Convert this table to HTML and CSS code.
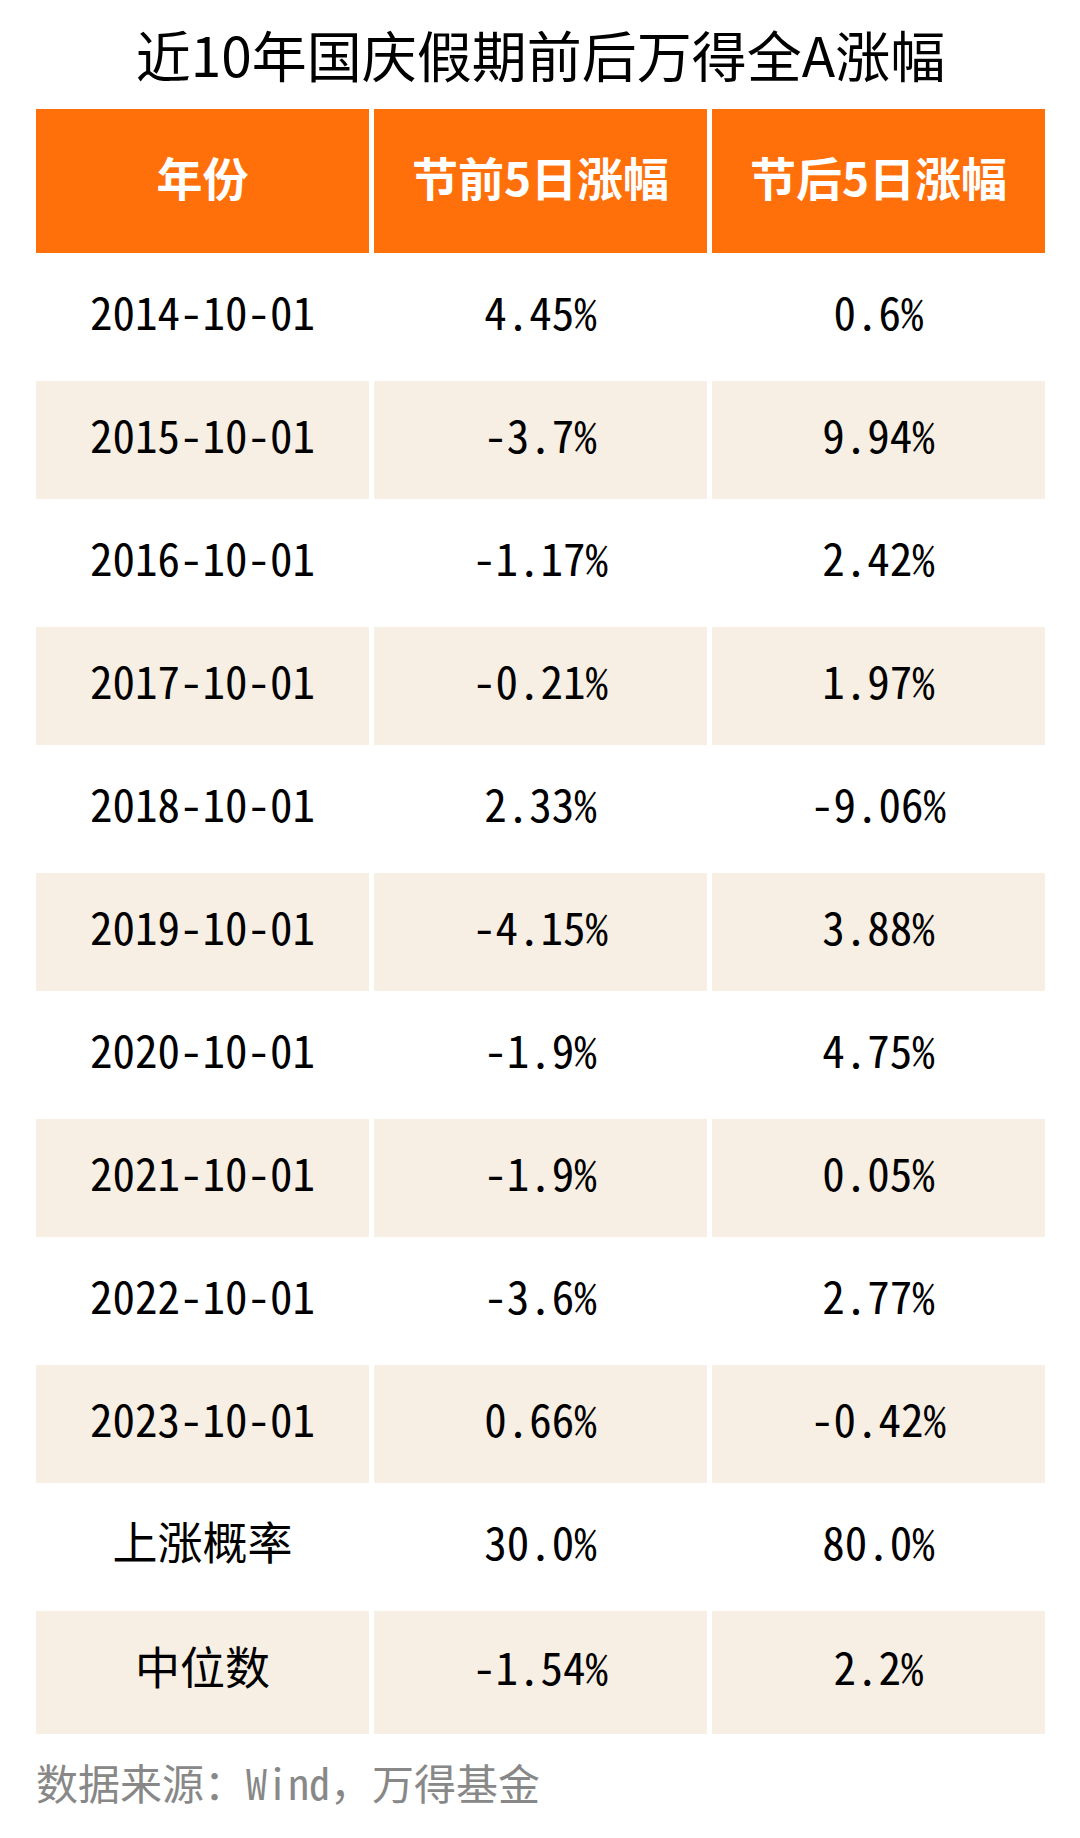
FILE: index.html
```html
<!DOCTYPE html>
<html lang="zh-CN">
<head>
<meta charset="utf-8">
<title>近10年国庆假期前后万得全A涨幅</title>
<link rel="stylesheet" href="styles.css">
</head>
<body>
<div class="page">
  <h1 class="title">近10年国庆假期前后万得全A涨幅</h1>
  <div class="table">
    <div class="row head">
      <div class="cell">年份</div>
      <div class="cell">节前5日涨幅</div>
      <div class="cell">节后5日涨幅</div>
    </div>
    <div class="row"><div class="cell">2014-10-01</div><div class="cell">4.45%</div><div class="cell">0.6%</div></div>
    <div class="row alt"><div class="cell">2015-10-01</div><div class="cell">-3.7%</div><div class="cell">9.94%</div></div>
    <div class="row"><div class="cell">2016-10-01</div><div class="cell">-1.17%</div><div class="cell">2.42%</div></div>
    <div class="row alt"><div class="cell">2017-10-01</div><div class="cell">-0.21%</div><div class="cell">1.97%</div></div>
    <div class="row"><div class="cell">2018-10-01</div><div class="cell">2.33%</div><div class="cell">-9.06%</div></div>
    <div class="row alt"><div class="cell">2019-10-01</div><div class="cell">-4.15%</div><div class="cell">3.88%</div></div>
    <div class="row"><div class="cell">2020-10-01</div><div class="cell">-1.9%</div><div class="cell">4.75%</div></div>
    <div class="row alt"><div class="cell">2021-10-01</div><div class="cell">-1.9%</div><div class="cell">0.05%</div></div>
    <div class="row"><div class="cell">2022-10-01</div><div class="cell">-3.6%</div><div class="cell">2.77%</div></div>
    <div class="row alt"><div class="cell">2023-10-01</div><div class="cell">0.66%</div><div class="cell">-0.42%</div></div>
    <div class="row"><div class="cell">上涨概率</div><div class="cell">30.0%</div><div class="cell">80.0%</div></div>
    <div class="row alt last"><div class="cell">中位数</div><div class="cell">-1.54%</div><div class="cell">2.2%</div></div>
  </div>
  <div class="source">数据来源：Wind，万得基金</div>
</div>
</body>
</html>
```
FILE: styles.css
```css
html, body {
  margin: 0;
  padding: 0;
  background: #ffffff;
}
.page {
  width: 1080px;
  padding: 0 35px 0 36px;
  box-sizing: border-box;
  font-family: "Noto Sans Mono CJK SC", "Noto Sans CJK SC", sans-serif;
  color: #000;
}
.title {
  margin: 0;
  height: 109px;
  padding-bottom: 2px;
  box-sizing: border-box;
  display: flex;
  align-items: center;
  justify-content: center;
  font-family: "Noto Sans CJK SC", sans-serif;
  font-weight: 400;
  font-size: 55px;
  line-height: 1;
}
.table {
  display: flex;
  flex-direction: column;
  gap: 5px;
}
.row {
  display: grid;
  grid-template-columns: 333px 333px 333px;
  column-gap: 5px;
  height: 118px;
}
.row.head {
  height: 144px;
}
.row.last {
  height: 123px;
}
.cell {
  display: flex;
  align-items: center;
  justify-content: center;
  box-sizing: border-box;
  padding-bottom: 14px;
  font-size: 45px;
  line-height: 1;
}
.head .cell {
  background: #ff700a;
  color: #fff;
  padding-bottom: 10px;
  font-family: "Noto Sans CJK SC", sans-serif;
  font-weight: 700;
  font-size: 46px;
}
.alt .cell {
  background: #f7efe3;
}
.source {
  margin-top: 17px;
  height: 60px;
  display: flex;
  align-items: center;
  font-size: 42px;
  color: #888888;
}
```
